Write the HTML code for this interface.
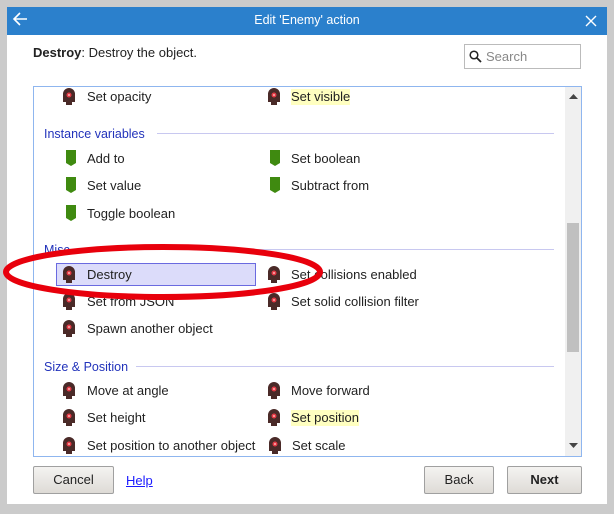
<!DOCTYPE html>
<html><head><style>
*{margin:0;padding:0;box-sizing:border-box}
body{width:614px;height:514px;background:#cbcbcb;font-family:"Liberation Sans",sans-serif;font-size:13px;color:#222;position:relative;overflow:hidden}
.dlg{position:absolute;left:7px;top:7px;width:600px;height:497px;background:#fff}
.tb{position:absolute;left:7px;top:7px;width:600px;height:28px;background:#2b80cc;color:#fff;text-align:center;line-height:26px;font-size:12.5px}
.a{position:absolute}
.list{position:absolute;left:33px;top:86px;width:549px;height:371px;border:1px solid #8fb6ef;overflow:hidden}
.sb{position:absolute;left:531px;top:0;width:17px;height:369px;background:#f0f0f0}
.th{position:absolute;left:2px;top:136px;width:12px;height:129px;background:#c0c0c0}
.it{position:absolute;line-height:16px}
.h{position:absolute;color:#2233bb;line-height:16px;font-size:12.5px}
.hl{position:absolute;height:1px;background:#c8c8f0}
.btn{position:absolute;height:28px;border:1px solid #a0a0a0;background:linear-gradient(#f4f3f1,#dedbd6);text-align:center;line-height:26px;border-radius:2px}
.y{background:#ffffc0}
</style></head><body>
<div class="dlg"></div>
<div class="tb">Edit 'Enemy' action</div>
<svg class="a" style="left:12px;top:12px" width="16" height="14"><path d="M15 7H2M8 1L2 7l6 6" stroke="#fff" stroke-width="1.6" fill="none"/></svg>
<svg class="a" style="left:585px;top:15px" width="12" height="12"><path d="M1 1L11 11M11 1L1 11" stroke="#fff" stroke-width="1.4"/></svg>
<div class="a" style="left:33px;top:45px"><b>Destroy</b>: Destroy the object.</div>
<div class="a" style="left:464px;top:44px;width:117px;height:25px;border:1px solid #bbb;color:#888;line-height:23px;padding-left:21px">Search</div>
<svg class="a" style="left:469px;top:50px" width="13" height="13"><circle cx="5" cy="5" r="3.8" stroke="#222" stroke-width="1.5" fill="none"/><path d="M8 8l4 4" stroke="#222" stroke-width="1.8"/></svg>
<div class="list">
<svg width="0" height="0" style="position:absolute"><defs>
<g id="r"><path d="M1 14V6a6 6 0 0 1 12 0v8h-3v3H4v-3z" fill="#4a2a28"/><circle cx="7" cy="7" r="2.5" fill="#e43a46"/><circle cx="7" cy="7" r="1" fill="#ffb0b0"/></g>
<g id="g"><path d="M1 0h10v13l-5 3l-5-3z" fill="#3f8a10"/></g>
</defs></svg>
<div class="sb"><div class="th"></div>
<svg style="position:absolute;left:4px;top:7px" width="9" height="5"><path d="M0 5L4.5 0L9 5z" fill="#444"/></svg>
<svg style="position:absolute;left:4px;top:356px" width="9" height="5"><path d="M0 0L4.5 5L9 0z" fill="#444"/></svg></div>

<svg class="a" style="left:28px;top:1px" width="14" height="17"><use href="#r"/></svg><div class="it" style="left:53px;top:2px">Set opacity</div>
<svg class="a" style="left:233px;top:1px" width="14" height="17"><use href="#r"/></svg><div class="it y" style="left:257px;top:2px">Set visible</div>

<div class="h" style="left:10px;top:39px">Instance variables</div><div class="hl" style="left:123px;top:46px;width:397px"></div>
<svg class="a" style="left:31px;top:63px" width="12" height="17"><use href="#g"/></svg><div class="it" style="left:53px;top:64px">Add to</div>
<svg class="a" style="left:235px;top:63px" width="12" height="17"><use href="#g"/></svg><div class="it" style="left:257px;top:64px">Set boolean</div>
<svg class="a" style="left:31px;top:90px" width="12" height="17"><use href="#g"/></svg><div class="it" style="left:53px;top:91px">Set value</div>
<svg class="a" style="left:235px;top:90px" width="12" height="17"><use href="#g"/></svg><div class="it" style="left:257px;top:91px">Subtract from</div>
<svg class="a" style="left:31px;top:118px" width="12" height="17"><use href="#g"/></svg><div class="it" style="left:53px;top:119px">Toggle boolean</div>

<div class="h" style="left:10px;top:155px">Misc</div><div class="hl" style="left:40px;top:162px;width:480px"></div>
<div class="a" style="left:22px;top:176px;width:200px;height:23px;background:#dcdcfa;border:1px solid #6a6ae0"></div>
<svg class="a" style="left:28px;top:179px" width="14" height="17"><use href="#r"/></svg><div class="it" style="left:53px;top:180px">Destroy</div>
<svg class="a" style="left:233px;top:179px" width="14" height="17"><use href="#r"/></svg><div class="it" style="left:257px;top:180px">Set collisions enabled</div>
<svg class="a" style="left:28px;top:206px" width="14" height="17"><use href="#r"/></svg><div class="it" style="left:53px;top:207px">Set from JSON</div>
<svg class="a" style="left:233px;top:206px" width="14" height="17"><use href="#r"/></svg><div class="it" style="left:257px;top:207px">Set solid collision filter</div>
<svg class="a" style="left:28px;top:233px" width="14" height="17"><use href="#r"/></svg><div class="it" style="left:53px;top:234px">Spawn another object</div>

<div class="h" style="left:10px;top:272px">Size &amp; Position</div><div class="hl" style="left:102px;top:279px;width:418px"></div>
<svg class="a" style="left:28px;top:295px" width="14" height="17"><use href="#r"/></svg><div class="it" style="left:53px;top:296px">Move at angle</div>
<svg class="a" style="left:233px;top:295px" width="14" height="17"><use href="#r"/></svg><div class="it" style="left:257px;top:296px">Move forward</div>
<svg class="a" style="left:28px;top:322px" width="14" height="17"><use href="#r"/></svg><div class="it" style="left:53px;top:323px">Set height</div>
<svg class="a" style="left:233px;top:322px" width="14" height="17"><use href="#r"/></svg><div class="it y" style="left:257px;top:323px">Set position</div>
<svg class="a" style="left:28px;top:350px" width="14" height="17"><use href="#r"/></svg><div class="it" style="left:53px;top:351px">Set position to another object</div>
<svg class="a" style="left:234px;top:350px" width="14" height="17"><use href="#r"/></svg><div class="it" style="left:258px;top:351px">Set scale</div>
</div>
<svg class="a" style="left:0;top:240px" width="330" height="70"><ellipse cx="163" cy="32" rx="157" ry="25" fill="none" stroke="#e8000c" stroke-width="6"/></svg>
<div class="btn" style="left:33px;top:466px;width:81px">Cancel</div>
<div class="a" style="left:126px;top:473px;color:#1a1aff;text-decoration:underline">Help</div>
<div class="btn" style="left:424px;top:466px;width:70px">Back</div>
<div class="btn" style="left:507px;top:466px;width:75px;font-weight:bold">Next</div>
</body></html>
